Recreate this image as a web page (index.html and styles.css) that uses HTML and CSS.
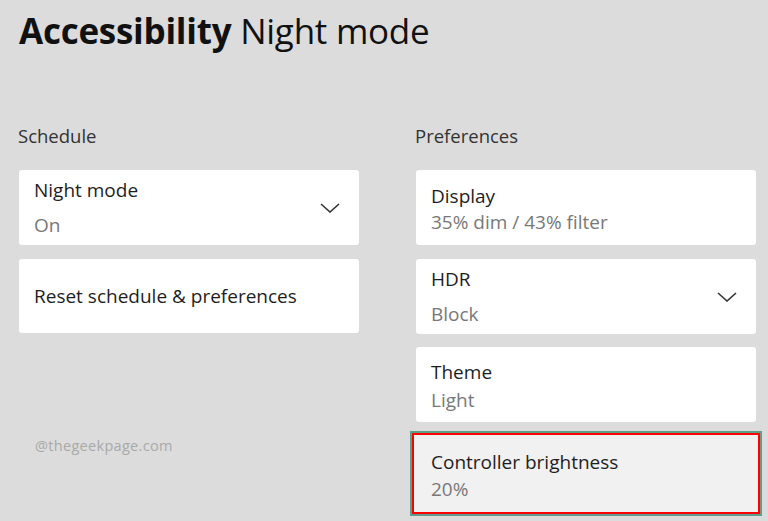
FILE: index.html
```html
<!DOCTYPE html>
<html>
<head>
<meta charset="utf-8">
<link rel="stylesheet" href="styles.css">
</head>
<body>
<div class="page">
  <h1 class="title"><b>Accessibility</b> Night mode</h1>
  <div class="columns">
    <div class="col">
      <div class="label">Schedule</div>
      <div class="card dropdown c-night">
        <div class="texts">
          <div class="t">Night mode</div>
          <div class="s">On</div>
        </div>
        <svg class="chev" width="20" height="10" viewBox="0 0 20 10"><path d="M1 1 L10 9 L19 1" fill="none" stroke="#333" stroke-width="1.6"/></svg>
      </div>
      <div class="card c-reset">
        <div class="t">Reset schedule &amp; preferences</div>
      </div>
      <div class="watermark">@thegeekpage.com</div>
    </div>
    <div class="col">
      <div class="label">Preferences</div>
      <div class="card c-display">
        <div class="t">Display</div>
        <div class="s">35% dim / 43% filter</div>
      </div>
      <div class="card dropdown c-hdr">
        <div class="texts">
          <div class="t">HDR</div>
          <div class="s">Block</div>
        </div>
        <svg class="chev" width="20" height="10" viewBox="0 0 20 10"><path d="M1 1 L10 9 L19 1" fill="none" stroke="#333" stroke-width="1.6"/></svg>
      </div>
      <div class="card c-theme">
        <div class="t">Theme</div>
        <div class="s">Light</div>
      </div>
      <div class="card c-ctrl focused">
        <div class="t">Controller brightness</div>
        <div class="s">20%</div>
      </div>
    </div>
  </div>
</div>
</body>
</html>
```

FILE: styles.css
```css
html, body {
  margin: 0;
  padding: 0;
  background: #dcdcdc;
  height: 100%;
}
.page {
  width: 768px;
  height: 521px;
  overflow: hidden;
  font-family: "Open Sans", "Noto Sans", sans-serif;
  color: #1e1e1e;
  box-sizing: border-box;
  padding: 9px 0 0 19px;
}
.title {
  margin: 0;
  font-size: 35px;
  line-height: 44px;
  font-weight: 400;
  letter-spacing: -0.25px;
  color: #111;
}
.title b {
  font-weight: 700;
}
.columns {
  display: flex;
  gap: 57px;
  margin-top: 71px;
}
.col {
  width: 340px;
  display: flex;
  flex-direction: column;
}
.label {
  font-size: 18.5px;
  line-height: 24px;
  color: #333;
  margin-left: -1px;
  margin-bottom: 22px;
}
.card {
  background: #fff;
  border-radius: 3px;
  height: 75px;
  box-sizing: border-box;
  padding-left: 15px;
  display: flex;
  flex-direction: column;
  font-size: 19px;
}
.t {
  color: #1e1e1e;
  line-height: 24px;
}
.s {
  color: #787878;
  line-height: 24px;
}
.dropdown {
  flex-direction: row;
  align-items: center;
  justify-content: space-between;
  padding-right: 19px;
}
.dropdown .texts {
  display: flex;
  flex-direction: column;
  gap: 11px;
}
.c-night {
  margin-bottom: 14px;
}
.c-hdr {
  margin-bottom: 13px;
}
.c-reset {
  height: 74px;
  justify-content: center;
}
.c-display {
  padding-top: 14px;
  margin-bottom: 14px;
  gap: 2px;
}
.c-theme {
  padding-top: 13px;
  gap: 4px;
  margin-bottom: 13px;
}
.c-ctrl {
  height: 77px;
  padding-top: 15px;
  gap: 3px;
  background: #f1f1f1;
}
.focused {
  border-radius: 0;
  box-shadow: 0 0 0 2px #ff0000, 0 0 0 4px #5e9e8c;
  width: 344px;
  margin-left: -2px;
  padding-left: 17px;
}
.watermark {
  margin-top: 103px;
  margin-left: 16px;
  font-size: 14.5px;
  color: #a9a9a9;
  letter-spacing: 0.3px;
}
```
